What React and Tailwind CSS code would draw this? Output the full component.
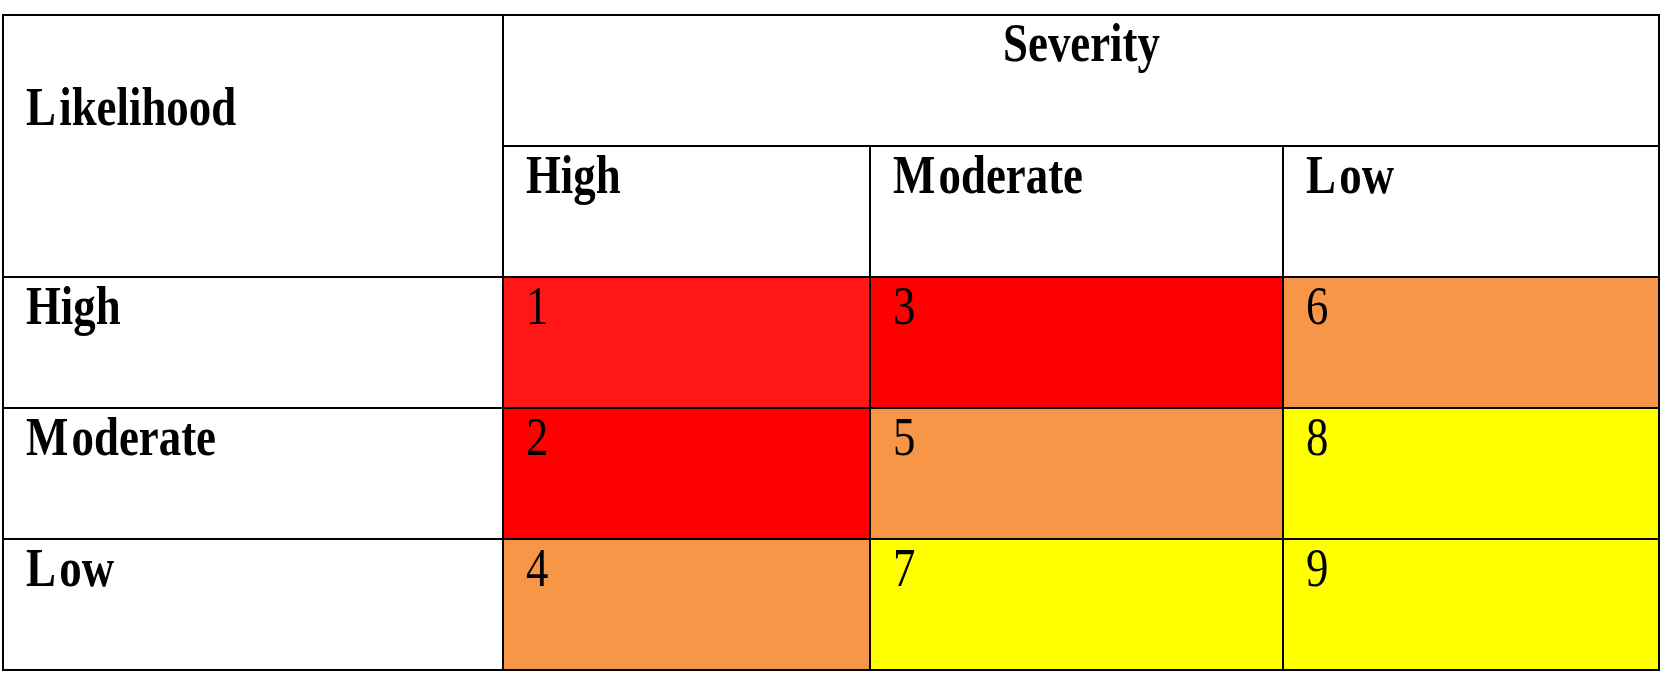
const LIKELIHOOD = ["High", "Moderate", "Low"];

const CELLS = [
  [
    { n: 1, bg: "bg-[#ff1616]" },
    { n: 3, bg: "bg-[#ff0000]" },
    { n: 6, bg: "bg-[#f79646]" },
  ],
  [
    { n: 2, bg: "bg-[#ff0000]" },
    { n: 5, bg: "bg-[#f79646]" },
    { n: 8, bg: "bg-[#ffff00]" },
  ],
  [
    { n: 4, bg: "bg-[#f79646]" },
    { n: 7, bg: "bg-[#ffff00]" },
    { n: 9, bg: "bg-[#ffff00]" },
  ],
];

// first capital is spaced apart in the source document ("L ow", "M oderate")
function Label({ text }) {
  const first = text[0];
  const gap = first === "L" ? "mr-[4px]" : first === "M" ? "mr-[4px]" : "";
  return (
    <>
      <span className={gap}>{first}</span>
      {text.slice(1)}
    </>
  );
}

function Txt({ children, bold = true, center = false }) {
  return (
    <span
      className={
        "inline-block scale-x-[0.83] whitespace-nowrap " +
        (center ? "origin-center " : "origin-left ") +
        (bold ? "font-bold" : "font-normal")
      }
    >
      {children}
    </span>
  );
}

export default function App() {
  return (
    <div
      className="min-h-screen bg-white pl-[2px] pt-[14px] text-black"
      style={{ fontFamily: '"Liberation Serif", "Times New Roman", serif' }}
    >
      <table className="w-[1656px] table-fixed border-collapse border-2 border-black text-[54px] leading-none">
        <colgroup>
          <col className="w-[500px]" />
          <col className="w-[367px]" />
          <col className="w-[413px]" />
          <col className="w-[376px]" />
        </colgroup>
        <thead>
          <tr className="h-[131px]">
            <th
              rowSpan={2}
              className="border-2 border-black px-[22px] pt-[64px] text-left align-top"
            >
              <Txt>
                <Label text="Likelihood" />
              </Txt>
            </th>
            <th colSpan={3} className="border-2 border-black pt-0 text-center align-top">
              <Txt center>Severity</Txt>
            </th>
          </tr>
          <tr className="h-[131px]">
            {LIKELIHOOD.map((s) => (
              <th key={s} className="border-2 border-black px-[22px] pt-[1px] text-left align-top">
                <Txt>
                  <Label text={s} />
                </Txt>
              </th>
            ))}
          </tr>
        </thead>
        <tbody>
          {CELLS.map((row, i) => (
            <tr key={LIKELIHOOD[i]} className="h-[131px]">
              <td className="border-2 border-black px-[22px] pt-[1px] align-top">
                <Txt>
                  <Label text={LIKELIHOOD[i]} />
                </Txt>
              </td>
              {row.map((c) => (
                <td key={c.n} className={"border-2 border-black px-[22px] pt-[1px] align-top " + c.bg}>
                  <Txt bold={false}>{c.n}</Txt>
                </td>
              ))}
            </tr>
          ))}
        </tbody>
      </table>
    </div>
  );
}
